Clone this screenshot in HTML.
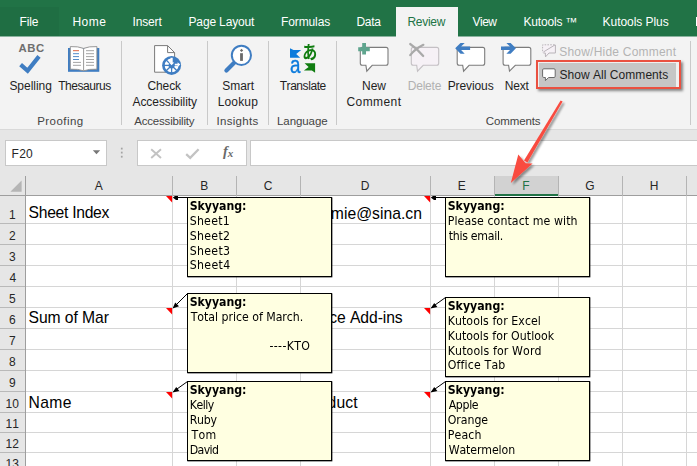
<!DOCTYPE html>
<html><head><meta charset="utf-8">
<title>Show All Comments</title>
<style>
html,body{margin:0;padding:0;}
body{width:697px;height:466px;overflow:hidden;position:relative;background:#fff;font-family:"Liberation Sans","DejaVu Sans",sans-serif;}
.a{position:absolute;}
.t{position:absolute;white-space:pre;line-height:20px;height:20px;z-index:5;font-kerning:none;}
.sep{position:absolute;top:41px;width:1px;height:84px;background:#c9c9c9;}
.wbox{position:absolute;top:140px;height:26px;background:#fff;border:1px solid #c8c8c8;box-sizing:border-box;}
.cs{position:absolute;top:176px;width:1px;height:20px;background:#b4b4b4;}
.hl{position:absolute;left:26px;width:671px;height:1px;background:#d6d6d6;}
.rl{position:absolute;left:0;width:25px;height:1px;background:#b9b9b9;}
.vl{position:absolute;top:196px;width:1px;height:270px;background:#d6d6d6;}
.cm{position:absolute;box-sizing:border-box;background:#ffffe1;border:1px solid #000;box-shadow:.35px .35px 0 0 #000;z-index:2;}
svg{position:absolute;left:0;top:0;overflow:visible;}
</style></head><body>
<!-- tab bar -->
<div class="a" style="left:0;top:0;width:697px;height:37px;background:#8ab39f"></div>
<div class="a" style="left:0;top:0;width:697px;height:36px;background:#217346"></div>
<div class="a" style="left:0;top:7px;width:59px;height:29px;background:#1f6e43"></div>
<div class="a" style="left:396px;top:7px;width:62px;height:30px;background:#f3f3f3"></div>
<div class="a" style="left:695.7px;top:17px;width:1.3px;height:9px;background:#fff"></div>
<!-- ribbon -->
<div class="a" style="left:0;top:36px;width:697px;height:93px;background:#f3f3f3;z-index:-1"></div>
<div class="sep" style="left:121px"></div>
<div class="sep" style="left:207px"></div>
<div class="sep" style="left:268px"></div>
<div class="sep" style="left:336px"></div>
<div class="sep" style="left:690px"></div>
<!-- highlight button -->
<div class="a" style="left:536px;top:60px;width:144.5px;height:29px;box-sizing:border-box;border:2px solid #ea5141;background:#f0f0f0;box-shadow:1.5px 1.5px 2.5px rgba(0,0,0,.45)"></div>
<div class="a" style="left:539px;top:62.5px;width:137px;height:24px;background:#c6c6c6"></div>

<!-- formula bar -->
<div class="a" style="left:0;top:129px;width:697px;height:47px;background:#e6e6e6;border-top:1px solid #d9d9d9;box-sizing:border-box"></div>
<div class="wbox" style="left:5px;width:102px"></div>
<div class="wbox" style="left:137px;width:110px"></div>
<div class="wbox" style="left:250px;width:460px"></div>

<!-- column header -->
<div class="a" style="left:0;top:176px;width:697px;height:20px;background:#e6e6e6"></div>
<div class="a" style="left:494px;top:176px;width:65px;height:20px;background:#d2d2d2"></div>
<div class="a" style="left:0;top:195px;width:697px;height:1px;background:#9e9e9e"></div>
<div class="a" style="left:494px;top:194px;width:65px;height:2px;background:#217346"></div>
<div class="cs" style="left:25px;background:#9e9e9e"></div>
<div class="cs" style="left:172px"></div>
<div class="cs" style="left:236px"></div>
<div class="cs" style="left:300px"></div>
<div class="cs" style="left:430px"></div>
<div class="cs" style="left:494px"></div>
<div class="cs" style="left:558px"></div>
<div class="cs" style="left:622px"></div>
<div class="cs" style="left:686px"></div>

<!-- grid -->
<div class="vl" style="left:172px"></div>
<div class="vl" style="left:236px"></div>
<div class="vl" style="left:300px"></div>
<div class="vl" style="left:430px"></div>
<div class="vl" style="left:494px"></div>
<div class="vl" style="left:558px"></div>
<div class="vl" style="left:622px"></div>
<div class="vl" style="left:686px"></div>
<div class="a" style="left:0;top:196px;width:25px;height:270px;background:#e6e6e6"></div>
<div class="a" style="left:25px;top:196px;width:1px;height:270px;background:#9e9e9e"></div>
<div class="hl" style="top:223px"></div><div class="rl" style="top:223px"></div>
<div class="hl" style="top:244px"></div><div class="rl" style="top:244px"></div>
<div class="hl" style="top:265px"></div><div class="rl" style="top:265px"></div>
<div class="hl" style="top:286px"></div><div class="rl" style="top:286px"></div>
<div class="hl" style="top:307px"></div><div class="rl" style="top:307px"></div>
<div class="hl" style="top:328px"></div><div class="rl" style="top:328px"></div>
<div class="hl" style="top:349px"></div><div class="rl" style="top:349px"></div>
<div class="hl" style="top:370px"></div><div class="rl" style="top:370px"></div>
<div class="hl" style="top:391px"></div><div class="rl" style="top:391px"></div>
<div class="hl" style="top:412px"></div><div class="rl" style="top:412px"></div>
<div class="hl" style="top:432px"></div><div class="rl" style="top:432px"></div>
<div class="hl" style="top:452px"></div><div class="rl" style="top:452px"></div>

<!-- comment boxes -->
<div class="cm" style="left:187px;top:197px;width:145px;height:80px"></div>
<div class="cm" style="left:445px;top:197px;width:145px;height:80px"></div>
<div class="cm" style="left:187px;top:293px;width:145px;height:80px"></div>
<div class="cm" style="left:445px;top:297px;width:145px;height:80px"></div>
<div class="cm" style="left:187px;top:381px;width:145px;height:80px"></div>
<div class="cm" style="left:445px;top:381px;width:145px;height:80px"></div>

<div class="t" style="left:19.50px;top:11.80px;font-size:12px;color:#ffffff;letter-spacing:-0.167px;">File</div>
<div class="t" style="left:72.40px;top:11.80px;font-size:12px;color:#ffffff;letter-spacing:0.467px;">Home</div>
<div class="t" style="left:132.50px;top:11.80px;font-size:12px;color:#ffffff;letter-spacing:-0.140px;">Insert</div>
<div class="t" style="left:188.50px;top:11.80px;font-size:12px;color:#ffffff;letter-spacing:-0.150px;">Page Layout</div>
<div class="t" style="left:281.00px;top:11.80px;font-size:12px;color:#ffffff;letter-spacing:-0.114px;">Formulas</div>
<div class="t" style="left:356.50px;top:11.80px;font-size:12px;color:#ffffff;letter-spacing:-0.333px;">Data</div>
<div class="t" style="left:472.50px;top:11.80px;font-size:12px;color:#ffffff;letter-spacing:-0.500px;">View</div>
<div class="t" style="left:523.50px;top:11.80px;font-size:12px;color:#ffffff;letter-spacing:-0.188px;">Kutools ™</div>
<div class="t" style="left:602.60px;top:11.80px;font-size:12px;color:#ffffff;letter-spacing:-0.055px;">Kutools Plus</div>
<div class="t" style="left:407.50px;top:11.80px;font-size:12px;color:#217346;letter-spacing:-0.300px;">Review</div>
<div class="t" style="left:9.40px;top:75.60px;font-size:12px;color:#1f1f1f;letter-spacing:-0.029px;">Spelling</div>
<div class="t" style="left:58.20px;top:75.60px;font-size:12px;color:#1f1f1f;letter-spacing:-0.450px;">Thesaurus</div>
<div class="t" style="left:147.40px;top:75.60px;font-size:12px;color:#1f1f1f;letter-spacing:-0.075px;">Check</div>
<div class="t" style="left:132.50px;top:91.60px;font-size:12px;color:#1f1f1f;letter-spacing:-0.067px;">Accessibility</div>
<div class="t" style="left:222.20px;top:75.60px;font-size:12px;color:#1f1f1f;">Smart</div>
<div class="t" style="left:217.70px;top:91.60px;font-size:12px;color:#1f1f1f;letter-spacing:0.160px;">Lookup</div>
<div class="t" style="left:279.70px;top:75.60px;font-size:12px;color:#1f1f1f;letter-spacing:-0.438px;">Translate</div>
<div class="t" style="left:362.00px;top:75.60px;font-size:12px;color:#1f1f1f;">New</div>
<div class="t" style="left:346.50px;top:91.60px;font-size:12px;color:#1f1f1f;letter-spacing:0.417px;">Comment</div>
<div class="t" style="left:447.70px;top:75.60px;font-size:12px;color:#1f1f1f;letter-spacing:-0.100px;">Previous</div>
<div class="t" style="left:504.70px;top:75.60px;font-size:12px;color:#1f1f1f;letter-spacing:-0.167px;">Next</div>
<div class="t" style="left:559.40px;top:64.90px;font-size:12px;color:#1f1f1f;letter-spacing:0.050px;">Show All Comments</div>
<div class="t" style="left:407.70px;top:75.60px;font-size:12px;color:#b1b1b1;letter-spacing:-0.200px;">Delete</div>
<div class="t" style="left:559.20px;top:42.00px;font-size:12px;color:#b4b4b4;letter-spacing:0.219px;">Show/Hide Comment</div>
<div class="t" style="left:37.20px;top:110.70px;font-size:11.5px;color:#444444;letter-spacing:0.457px;">Proofing</div>
<div class="t" style="left:134.20px;top:110.70px;font-size:11.5px;color:#444444;letter-spacing:-0.183px;">Accessibility</div>
<div class="t" style="left:216.50px;top:110.70px;font-size:11.5px;color:#444444;letter-spacing:0.286px;">Insights</div>
<div class="t" style="left:277.00px;top:110.70px;font-size:11.5px;color:#444444;letter-spacing:-0.071px;">Language</div>
<div class="t" style="left:485.70px;top:110.70px;font-size:11.5px;color:#444444;letter-spacing:-0.100px;">Comments</div>
<div class="t" style="left:18.60px;top:38.30px;font-size:11.3px;color:#6e6e6e;letter-spacing:0.500px;font-weight:700;">ABC</div>
<div class="t" style="left:11.50px;top:143.70px;font-size:12px;color:#262626;letter-spacing:0.300px;">F20</div>
<div class="t" style="left:94.80px;top:175.90px;font-size:12px;color:#262626;">A</div>
<div class="t" style="left:200.30px;top:175.90px;font-size:12px;color:#262626;">B</div>
<div class="t" style="left:263.80px;top:175.90px;font-size:12px;color:#262626;">C</div>
<div class="t" style="left:360.80px;top:175.90px;font-size:12px;color:#262626;">D</div>
<div class="t" style="left:457.80px;top:175.90px;font-size:12px;color:#262626;">E</div>
<div class="t" style="left:585.30px;top:175.90px;font-size:12px;color:#262626;">G</div>
<div class="t" style="left:649.80px;top:175.90px;font-size:12px;color:#262626;">H</div>
<div class="t" style="left:522.30px;top:175.90px;font-size:12px;color:#217346;">F</div>
<div class="t" style="left:9.10px;top:204.60px;font-size:12px;color:#262626;">1</div>
<div class="t" style="left:9.10px;top:225.70px;font-size:12px;color:#262626;">2</div>
<div class="t" style="left:9.10px;top:246.70px;font-size:12px;color:#262626;">3</div>
<div class="t" style="left:9.60px;top:267.70px;font-size:12px;color:#262626;">4</div>
<div class="t" style="left:9.10px;top:288.70px;font-size:12px;color:#262626;">5</div>
<div class="t" style="left:9.10px;top:309.70px;font-size:12px;color:#262626;">6</div>
<div class="t" style="left:9.10px;top:330.70px;font-size:12px;color:#262626;">7</div>
<div class="t" style="left:9.10px;top:351.70px;font-size:12px;color:#262626;">8</div>
<div class="t" style="left:9.10px;top:372.70px;font-size:12px;color:#262626;">9</div>
<div class="t" style="left:5.60px;top:393.80px;font-size:12px;color:#262626;">10</div>
<div class="t" style="left:5.60px;top:413.80px;font-size:12px;color:#262626;">11</div>
<div class="t" style="left:5.60px;top:433.80px;font-size:12px;color:#262626;">12</div>
<div class="t" style="left:5.60px;top:453.80px;font-size:12px;color:#262626;">13</div>
<div class="t" style="left:28.60px;top:203.40px;font-size:15.7px;color:#000;letter-spacing:-0.300px;z-index:1;">Sheet Index</div>
<div class="t" style="left:28.60px;top:308.40px;font-size:15.7px;color:#000;letter-spacing:-0.089px;z-index:1;">Sum of Mar</div>
<div class="t" style="left:28.50px;top:392.50px;font-size:15.7px;color:#000;letter-spacing:0.400px;z-index:1;">Name</div>
<div class="t" style="left:330.80px;top:203.50px;font-size:15.7px;color:#000;letter-spacing:0.020px;z-index:1;">mie@sina.cn</div>
<div class="t" style="left:329.20px;top:308.40px;font-size:15.7px;color:#000;letter-spacing:-0.067px;z-index:1;">ce Add-ins</div>
<div class="t" style="left:327.60px;top:392.50px;font-size:15.7px;color:#000;letter-spacing:0.100px;z-index:1;">duct</div>
<div class="t" style="left:189.70px;top:196.50px;font-size:11px;color:#000;letter-spacing:-0.043px;font-family:'DejaVu Sans','Liberation Sans',sans-serif;font-weight:700;transform:scaleY(1.09);transform-origin:0 13.00px;">Skyyang:</div>
<div class="t" style="left:189.70px;top:211.60px;font-size:11px;color:#000;letter-spacing:0.240px;font-family:'DejaVu Sans','Liberation Sans',sans-serif;transform:scaleY(1.09);transform-origin:0 13.00px;">Sheet1</div>
<div class="t" style="left:189.70px;top:226.50px;font-size:11px;color:#000;letter-spacing:0.300px;font-family:'DejaVu Sans','Liberation Sans',sans-serif;transform:scaleY(1.09);transform-origin:0 13.00px;">Sheet2</div>
<div class="t" style="left:189.70px;top:241.50px;font-size:11px;color:#000;letter-spacing:0.300px;font-family:'DejaVu Sans','Liberation Sans',sans-serif;transform:scaleY(1.09);transform-origin:0 13.00px;">Sheet3</div>
<div class="t" style="left:189.70px;top:256.40px;font-size:11px;color:#000;letter-spacing:0.340px;font-family:'DejaVu Sans','Liberation Sans',sans-serif;transform:scaleY(1.09);transform-origin:0 13.00px;">Sheet4</div>
<div class="t" style="left:447.70px;top:196.50px;font-size:11px;color:#000;letter-spacing:-0.014px;font-family:'DejaVu Sans','Liberation Sans',sans-serif;font-weight:700;transform:scaleY(1.09);transform-origin:0 13.00px;">Skyyang:</div>
<div class="t" style="left:447.70px;top:211.60px;font-size:11px;color:#000;letter-spacing:0.081px;font-family:'DejaVu Sans','Liberation Sans',sans-serif;transform:scaleY(1.09);transform-origin:0 13.00px;">Please contact me with</div>
<div class="t" style="left:448.70px;top:226.50px;font-size:11px;color:#000;letter-spacing:-0.290px;font-family:'DejaVu Sans','Liberation Sans',sans-serif;transform:scaleY(1.09);transform-origin:0 13.00px;">this email.</div>
<div class="t" style="left:189.70px;top:292.80px;font-size:11px;color:#000;letter-spacing:-0.043px;font-family:'DejaVu Sans','Liberation Sans',sans-serif;font-weight:700;transform:scaleY(1.09);transform-origin:0 13.00px;">Skyyang:</div>
<div class="t" style="left:190.70px;top:307.50px;font-size:11px;color:#000;letter-spacing:-0.035px;font-family:'DejaVu Sans','Liberation Sans',sans-serif;transform:scaleY(1.09);transform-origin:0 13.00px;">Total price of March.</div>
<div class="t" style="left:269.50px;top:337.30px;font-size:11px;color:#000;letter-spacing:0.333px;font-family:'DejaVu Sans','Liberation Sans',sans-serif;transform:scaleY(1.09);transform-origin:0 13.00px;">----KTO</div>
<div class="t" style="left:447.70px;top:296.50px;font-size:11px;color:#000;letter-spacing:-0.014px;font-family:'DejaVu Sans','Liberation Sans',sans-serif;font-weight:700;transform:scaleY(1.09);transform-origin:0 13.00px;">Skyyang:</div>
<div class="t" style="left:447.70px;top:311.70px;font-size:11px;color:#000;letter-spacing:0.063px;font-family:'DejaVu Sans','Liberation Sans',sans-serif;transform:scaleY(1.09);transform-origin:0 13.00px;">Kutools for Excel</div>
<div class="t" style="left:447.70px;top:326.70px;font-size:11px;color:#000;letter-spacing:0.044px;font-family:'DejaVu Sans','Liberation Sans',sans-serif;transform:scaleY(1.09);transform-origin:0 13.00px;">Kutools for Outlook</div>
<div class="t" style="left:447.70px;top:341.70px;font-size:11px;color:#000;letter-spacing:0.127px;font-family:'DejaVu Sans','Liberation Sans',sans-serif;transform:scaleY(1.09);transform-origin:0 13.00px;">Kutools for Word</div>
<div class="t" style="left:447.70px;top:356.40px;font-size:11px;color:#000;letter-spacing:0.156px;font-family:'DejaVu Sans','Liberation Sans',sans-serif;transform:scaleY(1.09);transform-origin:0 13.00px;">Office Tab</div>
<div class="t" style="left:189.70px;top:380.80px;font-size:11px;color:#000;letter-spacing:-0.043px;font-family:'DejaVu Sans','Liberation Sans',sans-serif;font-weight:700;transform:scaleY(1.09);transform-origin:0 13.00px;">Skyyang:</div>
<div class="t" style="left:189.70px;top:395.90px;font-size:11px;color:#000;letter-spacing:-0.500px;font-family:'DejaVu Sans','Liberation Sans',sans-serif;transform:scaleY(1.09);transform-origin:0 13.00px;">Kelly</div>
<div class="t" style="left:189.70px;top:410.70px;font-size:11px;color:#000;letter-spacing:-0.267px;font-family:'DejaVu Sans','Liberation Sans',sans-serif;transform:scaleY(1.09);transform-origin:0 13.00px;">Ruby</div>
<div class="t" style="left:191.50px;top:425.60px;font-size:11px;color:#000;letter-spacing:0.300px;font-family:'DejaVu Sans','Liberation Sans',sans-serif;transform:scaleY(1.09);transform-origin:0 13.00px;">Tom</div>
<div class="t" style="left:189.70px;top:440.50px;font-size:11px;color:#000;letter-spacing:-0.600px;font-family:'DejaVu Sans','Liberation Sans',sans-serif;transform:scaleY(1.09);transform-origin:0 13.00px;">David</div>
<div class="t" style="left:447.70px;top:380.80px;font-size:11px;color:#000;letter-spacing:-0.014px;font-family:'DejaVu Sans','Liberation Sans',sans-serif;font-weight:700;transform:scaleY(1.09);transform-origin:0 13.00px;">Skyyang:</div>
<div class="t" style="left:448.70px;top:395.90px;font-size:11px;color:#000;letter-spacing:-0.350px;font-family:'DejaVu Sans','Liberation Sans',sans-serif;transform:scaleY(1.09);transform-origin:0 13.00px;">Apple</div>
<div class="t" style="left:447.70px;top:410.70px;font-size:11px;color:#000;letter-spacing:-0.040px;font-family:'DejaVu Sans','Liberation Sans',sans-serif;transform:scaleY(1.09);transform-origin:0 13.00px;">Orange</div>
<div class="t" style="left:447.70px;top:425.60px;font-size:11px;color:#000;letter-spacing:0.150px;font-family:'DejaVu Sans','Liberation Sans',sans-serif;transform:scaleY(1.09);transform-origin:0 13.00px;">Peach</div>
<div class="t" style="left:448.70px;top:440.50px;font-size:11px;color:#000;letter-spacing:-0.111px;font-family:'DejaVu Sans','Liberation Sans',sans-serif;transform:scaleY(1.09);transform-origin:0 13.00px;">Watermelon</div>

<!-- icons and overlays -->
<svg width="697" height="466" viewBox="0 0 697 466" style="z-index:6">
<!-- spelling check -->
<polyline points="20.6,64.6 27.6,70.8 39,56.4" fill="none" stroke="#3f7dc2" stroke-width="4.2" stroke-linejoin="miter"/>
<!-- thesaurus book -->
<rect x="68" y="48" width="31.3" height="23.8" fill="#3f7dc2"/>
<path d="M70.3,46.6 Q78,46.2 83.6,48.4 Q89,46.2 96.9,46.6 L96.9,69.2 Q89,68.8 83.6,70.8 Q78,68.8 70.3,69.2 Z" fill="#fff" stroke="#8c8c8c" stroke-width="0.9"/>
<line x1="83.6" y1="48.4" x2="83.6" y2="70.6" stroke="#8c8c8c" stroke-width="0.9"/>
<g stroke-width="0.9">
<line x1="73" x2="79" y1="50.7" y2="50.7" stroke="#d9532c"/>
<line x1="73" x2="79" y1="53.7" y2="53.7" stroke="#3f7dc2"/>
<line x1="73" x2="79" y1="56.6" y2="56.6" stroke="#3f7dc2"/>
<line x1="73" x2="79" y1="59.5" y2="59.5" stroke="#3f7dc2"/>
<line x1="73" x2="81" y1="62.4" y2="62.4" stroke="#9a9a9a"/>
<line x1="73" x2="81" y1="65.3" y2="65.3" stroke="#9a9a9a"/>
<g stroke="#9a9a9a">
<line x1="86" x2="94" y1="50.7" y2="50.7"/><line x1="86" x2="94" y1="53.7" y2="53.7"/><line x1="86" x2="94" y1="56.6" y2="56.6"/><line x1="86" x2="94" y1="59.5" y2="59.5"/><line x1="86" x2="94" y1="62.4" y2="62.4"/><line x1="86" x2="94" y1="65.3" y2="65.3"/>
</g></g>
<!-- check accessibility -->
<path d="M154.6,45.6 L167.6,45.6 L174.6,52.6 L174.6,72.2 L154.6,72.2 Z" fill="#fff" stroke="#7a7a7a" stroke-width="1"/>
<path d="M167.6,45.6 L167.6,52.6 L174.6,52.6" fill="none" stroke="#7a7a7a" stroke-width="1"/>
<circle cx="171.6" cy="65.4" r="9.5" fill="#3f7dc2"/>
<path d="M178.50,65.40 A6.9,6.9 0 1 1 171.60,58.50 L171.60,62.40 A3.0,3.0 0 1 0 174.60,65.40 Z" fill="#fff"/>
<g stroke="#3f7dc2" stroke-width="1.3"><line x1="173.10" y1="65.40" x2="179.60" y2="65.40"/><line x1="172.66" y1="66.46" x2="177.26" y2="71.06"/><line x1="171.60" y1="66.90" x2="171.60" y2="73.40"/><line x1="170.54" y1="66.46" x2="165.94" y2="71.06"/><line x1="170.10" y1="65.40" x2="163.60" y2="65.40"/><line x1="170.54" y1="64.34" x2="165.94" y2="59.74"/><line x1="171.60" y1="63.90" x2="171.60" y2="57.40"/></g>
<path d="M170.5,57.800000000000004 h2.2 v4.6 h1.5 l-2.6,2.8 l-2.6,-2.8 h1.5 Z" fill="#fff"/>
<path d="M174.79999999999998,63.7 h2.8 v-1.5 l2.7,2.4 l-2.7,2.4 v-1.5 h-2.8 Z" fill="#fff"/>
<!-- smart lookup -->
<line x1="234.4" y1="62.6" x2="226.4" y2="70.6" stroke="#3f7dc2" stroke-width="4.2" stroke-linecap="round"/>
<circle cx="241.4" cy="55.3" r="9.6" fill="#fff" stroke="#3f7dc2" stroke-width="2"/>
<rect x="240.1" y="53.2" width="2.8" height="7.7" fill="#6a6a6a"/>
<rect x="240.4" y="49.3" width="2.3" height="2.3" fill="#6a6a6a" transform="rotate(45 241.55 50.45)"/>
<!-- translate -->
<path d="M290,48.2 L293.5,50 L301.2,50 L296.2,53.9 L300.2,57.8 L290,57.8 Z" fill="#0c7bdc"/>
<path d="M315.1,72.8 L311.9,70.6 L303.9,70.6 L308.6,66.9 L304.6,63.2 L315.1,63.2 Z" fill="#107c10"/>
<!-- new comment -->
<path d="M362.3,47.4 H386 Q388,47.4 388,49.4 V63.3 Q388,65.3 386,65.3 H372.2 L366.8,71.2 L365.9,65.3 H362.3 Q360.3,65.3 360.3,63.3 V49.4 Q360.3,47.4 362.3,47.4 Z" fill="#fff" stroke="#7c7c7c" stroke-width="1.1"/>
<path d="M362.2,43 h3.8 v4.3 h3.8 v3.9 h-3.8 v3.3 h-3.8 v-3.3 h-4 v-3.9 h4 Z" fill="#5fa58e"/>
<!-- delete -->
<path d="M413.3,47.4 H436.7 Q438.7,47.4 438.7,49.4 V63.3 Q438.7,65.3 436.7,65.3 H423.2 L417.5,71.2 L416.7,65.3 H413.3 Q411.3,65.3 411.3,63.3 V49.4 Q411.3,47.4 413.3,47.4 Z" fill="#f6f1f6" stroke="#c4c0c4" stroke-width="1.1"/>
<path d="M410.2,44 Q417,48.5 423.2,56" fill="none" stroke="#a9a9a9" stroke-width="2.2" stroke-linecap="round"/>
<path d="M423.4,44.8 Q415,49 410.2,55.2" fill="none" stroke="#a9a9a9" stroke-width="2.2" stroke-linecap="round"/>
<!-- previous -->
<path d="M459.2,47.4 H482.7 Q484.7,47.4 484.7,49.4 V63.3 Q484.7,65.3 482.7,65.3 H469.1 L463.6,71.2 L462.7,65.3 H459.2 Q457.2,65.3 457.2,63.3 V49.4 Q457.2,47.4 459.2,47.4 Z" fill="#fff" stroke="#7c7c7c" stroke-width="1.1"/>
<path d="M470.1,46.5 v3.6 h-9 l3.6,3.7 h-4.2 l-5.3,-5.5 l5.3,-5.4 h4.2 l-3.6,3.6 Z" fill="#3f7dc2"/>
<!-- next -->
<path d="M505.1,47.4 H528.8 Q530.8,47.4 530.8,49.4 V63.3 Q530.8,65.3 528.8,65.3 H515.3 L509.5,71.2 L508.6,65.3 H505.1 Q503.1,65.3 503.1,63.3 V49.4 Q503.1,47.4 505.1,47.4 Z" fill="#fff" stroke="#7c7c7c" stroke-width="1.1"/>
<path d="M501,46.5 v3.6 h9 l-3.6,3.7 h4.2 l5.3,-5.5 l-5.3,-5.4 h-4.2 l3.6,3.6 Z" fill="#3f7dc2"/>
<!-- small: show/hide -->
<path d="M542.6,44.8 H555.4 V53 H549 L545.5,56.9 L545.3,53 H542.6 Z" fill="#f6f1f6"/>
<path d="M555.4,44.8 V53 H549 L545.5,56.9 L545.3,53 H543.4 M543.4,52 L555,44.9" fill="none" stroke="#b9b4b9" stroke-width="1"/>
<path d="M554.6,44.8 H542.6 V52.6" fill="none" stroke="#b9b4b9" stroke-width="1" stroke-dasharray="1.6 1.2"/>
<!-- small: show all -->
<path d="M543.8,68.8 H554 Q555.2,68.8 555.2,70 V76.3 Q555.2,77.5 554,77.5 H548.6 L545.4,80.6 L545.4,77.5 H543.8 Q542.6,77.5 542.6,76.3 V70 Q542.6,68.8 543.8,68.8 Z" fill="#fff" stroke="#6a6a6a" stroke-width="1"/>
<!-- formula bar glyphs -->
<path d="M92.8,150.2 h7.4 l-3.7,4 Z" fill="#777"/>
<g fill="#a3a3a3"><rect x="120.9" y="147.7" width="1.7" height="1.8"/><rect x="120.9" y="151.7" width="1.7" height="1.8"/><rect x="120.9" y="155.8" width="1.7" height="1.8"/></g>
<path d="M151.2,149.2 L161,158 M161,149.2 L151.2,158" stroke="#c3c3c3" stroke-width="1.9" fill="none"/>
<path d="M186.2,154.2 L190.2,157.8 L198.6,149.2" stroke="#c3c3c3" stroke-width="2.3" fill="none"/>
<!-- select-all corner -->
<path d="M21.6,180.6 V191.8 H10.4 Z" fill="#b5b5b5"/>
<!-- comment indicators -->
<g fill="#ff0000">
<path d="M166,196 H172.1 V202.4 Z"/><path d="M424,196 H430.1 V202.4 Z"/>
<path d="M166,308 H172.1 V314.4 Z"/><path d="M424,308 H430.1 V314.4 Z"/>
<path d="M166,392 H172.1 V398.4 Z"/><path d="M424,392 H430.1 V398.4 Z"/>
</g>
<!-- connectors -->
<g stroke="#000" stroke-width="1" fill="none">
<line x1="174" y1="197.5" x2="188" y2="197.5"/><line x1="432" y1="197.5" x2="446" y2="197.5"/>
<line x1="187.5" y1="293.5" x2="173.5" y2="307.5"/><line x1="445.5" y1="297.5" x2="431.5" y2="307.5"/>
<line x1="187.5" y1="381.5" x2="173.5" y2="391.5"/><line x1="445.5" y1="381.5" x2="431.5" y2="391.5"/>
</g>
<g fill="#000">
<path d="M172.8,197.4 L175,196 L178,196 L178,199.9 L176,199.9 Z"/><path d="M430.8,197.4 L433,196 L436,196 L436,199.9 L434,199.9 Z"/>
<path d="M172.6,308.6 L175.2,302.6 L179,306.2 Z"/><path d="M430.6,308.4 L434.2,303 L437.4,307 Z"/>
<path d="M172.6,392.4 L176.2,387 L179.4,391 Z"/><path d="M430.6,392.4 L434.2,387 L437.4,391 Z"/>
</g>
<!-- red arrow -->
<defs><filter id="sh" x="-20%" y="-20%" width="150%" height="150%"><feGaussianBlur in="SourceAlpha" stdDeviation="1"/><feOffset dx="1.5" dy="1.5"/><feComponentTransfer><feFuncA type="linear" slope="0.4"/></feComponentTransfer><feMerge><feMergeNode/><feMergeNode in="SourceGraphic"/></feMerge></filter></defs>
<g filter="url(#sh)" fill="#f94b3f">
<path d="M560.6,100.4 L562.6,101.6 L527.4,162.4 L524,160.4 Z"/>
<path d="M510.8,183 L518.3,154.4 L525.6,163.2 L532.6,163.4 Z"/>
</g>
</svg>
<!-- glyph icons -->
<div class="t" style="left:302.2px;top:42.5px;font-size:15px;font-weight:700;color:#107c10;font-family:'Liberation Sans','Noto Sans CJK JP',sans-serif;z-index:7;transform:scaleY(1.18);transform-origin:0 50%">あ</div>
<div class="t" style="left:289.6px;top:54.7px;font-size:23.5px;color:#0c7bdc;-webkit-text-stroke:.4px #0c7bdc;z-index:7;transform:scaleX(.8);transform-origin:0 0">a</div>
<div class="t" style="left:223px;top:141.3px;font-size:14.5px;color:#6a6a6a;font-family:'Liberation Serif','DejaVu Serif',serif;font-style:italic;font-weight:700;z-index:7;letter-spacing:-0.2px">f<span style="font-size:11px;position:relative;top:1px">x</span></div>
</body></html>
